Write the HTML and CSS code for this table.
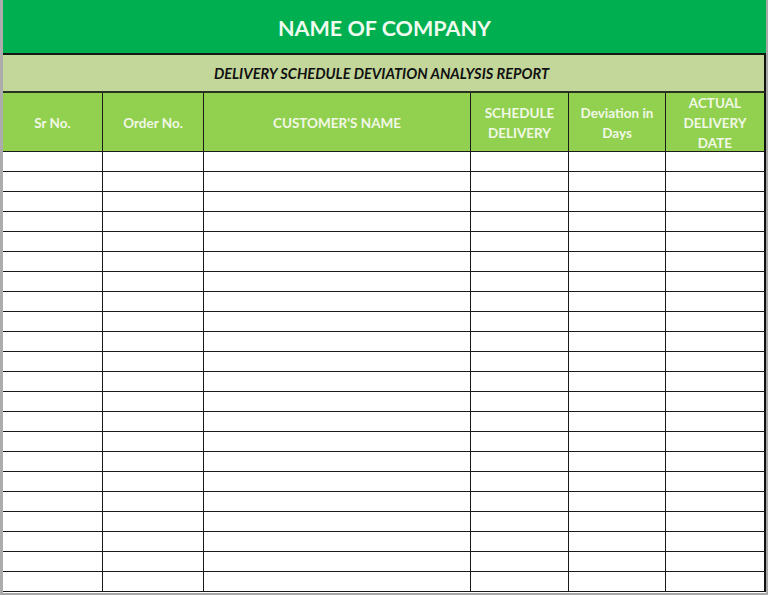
FILE: index.html
```html
<!DOCTYPE html>
<html>
<head>
<meta charset="utf-8">
<link rel="stylesheet" href="styles.css">
</head>
<body>
<div class="sheet">
  <div class="title">NAME OF COMPANY</div>
  <div class="subtitle">DELIVERY SCHEDULE DEVIATION ANALYSIS REPORT</div>
  <div class="row head">
    <div class="cell">Sr No.</div>
    <div class="cell">Order No.</div>
    <div class="cell">CUSTOMER'S NAME</div>
    <div class="cell">SCHEDULE<br>DELIVERY</div>
    <div class="cell">Deviation in<br>Days</div>
    <div class="cell">ACTUAL<br>DELIVERY<br>DATE</div>
  </div>
  <div class="body">
    <div class="row"><div class="cell"></div><div class="cell"></div><div class="cell"></div><div class="cell"></div><div class="cell"></div><div class="cell"></div></div>
    <div class="row"><div class="cell"></div><div class="cell"></div><div class="cell"></div><div class="cell"></div><div class="cell"></div><div class="cell"></div></div>
    <div class="row"><div class="cell"></div><div class="cell"></div><div class="cell"></div><div class="cell"></div><div class="cell"></div><div class="cell"></div></div>
    <div class="row"><div class="cell"></div><div class="cell"></div><div class="cell"></div><div class="cell"></div><div class="cell"></div><div class="cell"></div></div>
    <div class="row"><div class="cell"></div><div class="cell"></div><div class="cell"></div><div class="cell"></div><div class="cell"></div><div class="cell"></div></div>
    <div class="row"><div class="cell"></div><div class="cell"></div><div class="cell"></div><div class="cell"></div><div class="cell"></div><div class="cell"></div></div>
    <div class="row"><div class="cell"></div><div class="cell"></div><div class="cell"></div><div class="cell"></div><div class="cell"></div><div class="cell"></div></div>
    <div class="row"><div class="cell"></div><div class="cell"></div><div class="cell"></div><div class="cell"></div><div class="cell"></div><div class="cell"></div></div>
    <div class="row"><div class="cell"></div><div class="cell"></div><div class="cell"></div><div class="cell"></div><div class="cell"></div><div class="cell"></div></div>
    <div class="row"><div class="cell"></div><div class="cell"></div><div class="cell"></div><div class="cell"></div><div class="cell"></div><div class="cell"></div></div>
    <div class="row"><div class="cell"></div><div class="cell"></div><div class="cell"></div><div class="cell"></div><div class="cell"></div><div class="cell"></div></div>
    <div class="row"><div class="cell"></div><div class="cell"></div><div class="cell"></div><div class="cell"></div><div class="cell"></div><div class="cell"></div></div>
    <div class="row"><div class="cell"></div><div class="cell"></div><div class="cell"></div><div class="cell"></div><div class="cell"></div><div class="cell"></div></div>
    <div class="row"><div class="cell"></div><div class="cell"></div><div class="cell"></div><div class="cell"></div><div class="cell"></div><div class="cell"></div></div>
    <div class="row"><div class="cell"></div><div class="cell"></div><div class="cell"></div><div class="cell"></div><div class="cell"></div><div class="cell"></div></div>
    <div class="row"><div class="cell"></div><div class="cell"></div><div class="cell"></div><div class="cell"></div><div class="cell"></div><div class="cell"></div></div>
    <div class="row"><div class="cell"></div><div class="cell"></div><div class="cell"></div><div class="cell"></div><div class="cell"></div><div class="cell"></div></div>
    <div class="row"><div class="cell"></div><div class="cell"></div><div class="cell"></div><div class="cell"></div><div class="cell"></div><div class="cell"></div></div>
    <div class="row"><div class="cell"></div><div class="cell"></div><div class="cell"></div><div class="cell"></div><div class="cell"></div><div class="cell"></div></div>
    <div class="row"><div class="cell"></div><div class="cell"></div><div class="cell"></div><div class="cell"></div><div class="cell"></div><div class="cell"></div></div>
    <div class="row"><div class="cell"></div><div class="cell"></div><div class="cell"></div><div class="cell"></div><div class="cell"></div><div class="cell"></div></div>
    <div class="row"><div class="cell"></div><div class="cell"></div><div class="cell"></div><div class="cell"></div><div class="cell"></div><div class="cell"></div></div>
  </div>
</div>
</body>
</html>
```
FILE: styles.css
```css
html, body {
  margin: 0;
  padding: 0;
  background: #ffffff;
}
.sheet {
  width: 768px;
  height: 595px;
  box-sizing: border-box;
  border-left: 3px solid #acacac;
  border-right: 2px solid #a8a8a8;
  border-bottom: 2px solid #a8a8a8;
  padding-bottom: 1px;
  font-family: Lato, "Open Sans", sans-serif;
  overflow: hidden;
  display: flex;
  flex-direction: column;
}
.title {
  height: 55px;
  box-sizing: border-box;
  background: #00b050;
  border-bottom: 2px solid #121a12;
  color: #effbef;
  font-weight: bold;
  font-size: 21.5px;
  display: flex;
  align-items: center;
  justify-content: center;
  padding-top: 3px;
}
.subtitle {
  height: 38px;
  box-sizing: border-box;
  background: #c4d79b;
  border-bottom: 2px solid #2a3322;
  border-right: 2px solid #111;
  padding-right: 4px;
  color: #111111;
  font-weight: bold;
  font-style: italic;
  font-size: 14.6px;
  display: flex;
  align-items: center;
  justify-content: center;
}
.row {
  display: grid;
  grid-template-columns: 100px 101px 267px 98px 97px 100px;
  height: 20px;
  box-sizing: border-box;
  border-bottom: 1px solid #1a1a1a;
}
.cell {
  border-right: 1px solid #1a1a1a;
}
.cell:last-child {
  border-right: 2px solid #111;
}
.head {
  height: 59px;
  background: #92d050;
}
.head .cell {
  color: #f1f8e6;
  font-weight: bold;
  font-size: 13.5px;
  line-height: 20px;
  display: flex;
  align-items: center;
  justify-content: center;
  text-align: center;
}
.body {
  display: flex;
  flex-direction: column;
}
```
